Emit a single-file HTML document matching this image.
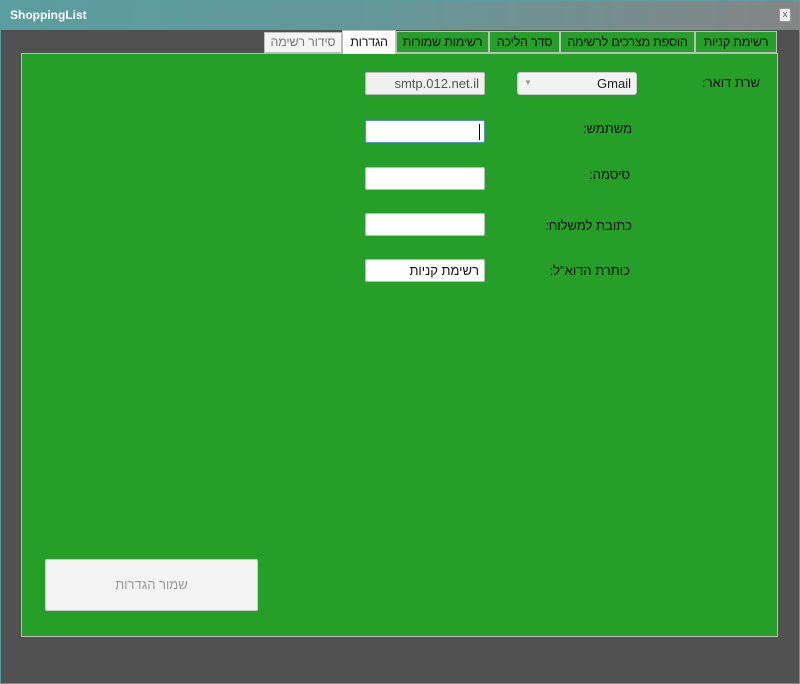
<!DOCTYPE html>
<html><head><meta charset="utf-8"><style>
*{box-sizing:border-box;margin:0;padding:0}
body{width:800px;height:684px;background:#515151;font-family:"Liberation Sans","Noto Sans CJK SC",sans-serif;font-size:13px;position:relative;overflow:hidden}
.frame{position:absolute;left:0;top:0;width:800px;height:684px;border:1px solid #5c9c9e;pointer-events:none}
.title{position:absolute;left:0;top:0;width:800px;height:30px;background:linear-gradient(90deg,#5a9ea0 0%,#63989a 45%,#858585 100%);}
.title b{position:absolute;left:10px;top:8px;color:#fff;font-size:12px}
.x{position:absolute;left:779px;top:8px;width:12px;height:14px;background:#eee;border:1px solid #999;border-radius:2px;font-size:9px;color:#555;text-align:center;line-height:11px}
.tab{position:absolute;top:31px;height:22px;background:#259f27;border:1px solid #bbb;color:#111;font-size:12.5px;text-align:center;line-height:20px;direction:rtl;white-space:nowrap;letter-spacing:-0.2px}
.panel{position:absolute;left:21px;top:53px;width:757px;height:584px;background:#259f27;border:1px solid #bbb}
.lbl{position:absolute;direction:rtl;color:#111;font-size:13px;white-space:nowrap}
.in{position:absolute;left:365px;width:120px;height:23px;background:#fff;border:1px solid #bbb;border-radius:2px;direction:rtl;padding:3px 5px;font-size:13px;color:#111}
</style></head><body>
<div class="title"><b>ShoppingList</b><div class="x">x</div></div>
<div class="tab" style="left:695px;width:82px">רשימת קניות</div>
<div class="tab" style="left:560px;width:135px">הוספת מצרכים לרשימה</div>
<div class="tab" style="left:489px;width:71px">סדר הליכה</div>
<div class="tab" style="left:396px;width:93px">רשימות שמורות</div>
<div class="tab" style="left:264px;width:78px;top:32px;height:21px;background:#f4f4f4;color:#777;line-height:19px">סידור רשימה</div>
<div class="panel"></div>
<div class="tab" style="left:342px;width:54px;top:30px;height:24px;background:#fff;border-bottom:none;line-height:22px">הגדרות</div>
<div class="lbl" style="right:40px;top:75px">שרת דואר:</div>
<div style="position:absolute;left:517px;top:72px;width:120px;height:23px;background:#f2f2f2;border:1px solid #ccc;border-radius:3px;direction:rtl;padding:3px 5px;color:#222">Gmail<span style="position:absolute;left:6px;top:5px;color:#999;font-size:8px">▼</span></div>
<div class="in" style="top:72px;background:#f0f0f0;color:#555">smtp.012.net.il</div>
<div class="lbl" style="right:168px;top:121px">משתמש:</div>
<div class="in" style="top:120px;border-color:#5b8fc7"><span style="position:absolute;right:4px;top:3px;width:1px;height:16px;background:#000"></span></div>
<div class="lbl" style="right:170px;top:167px">סיסמה:</div>
<div class="in" style="top:167px"></div>
<div class="lbl" style="right:168px;top:218px">כתובת למשלוח:</div>
<div class="in" style="top:213px"></div>
<div class="lbl" style="right:170px;top:263px">כותרת הדוא"ל:</div>
<div class="in" style="top:259px">רשימת קניות</div>
<div style="position:absolute;left:45px;top:559px;width:213px;height:52px;background:#f3f3f3;border:1px solid #ccc;border-radius:2px;text-align:center;line-height:50px;color:#999;direction:rtl">שמור הגדרות</div>
<div class="frame"></div>
</body></html>
